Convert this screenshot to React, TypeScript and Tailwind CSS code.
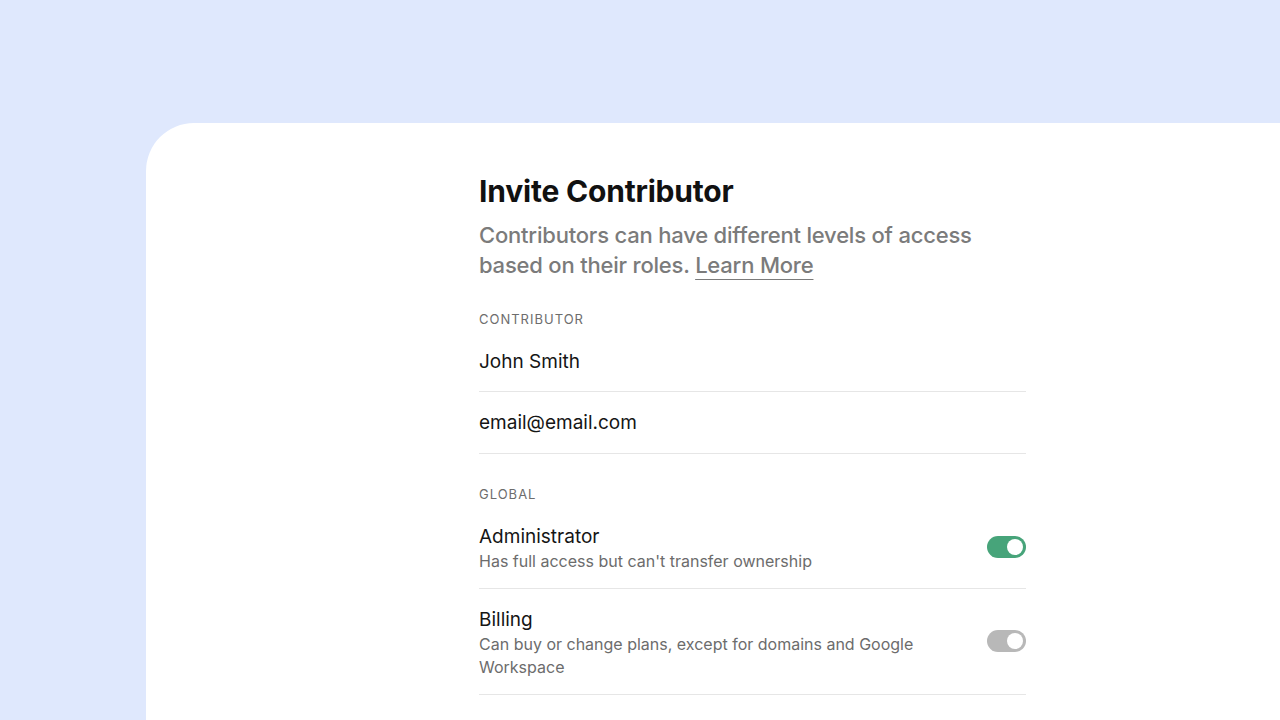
function Toggle({ on }: { on: boolean }) {
  return (
    <div
      className={`mb-[4px] flex h-[22px] w-[39px] shrink-0 items-center justify-end rounded-full px-[3px] ${
        on ? "bg-[#47a47a]" : "bg-[#b8b8b8]"
      }`}
    >
      <div className="h-4 w-4 rounded-full bg-white" />
    </div>
  );
}

function Role({ title, desc, on }: { title: string; desc: string; on: boolean }) {
  return (
    <div className="flex items-center justify-between gap-10 border-b border-[#e6e6e6] pb-[15px] pt-[18px]">
      <div>
        <div className="text-[19px] leading-[26px] text-[#151515]">{title}</div>
        <div className="text-[16px] leading-[23px] text-[#6c6c6c]">{desc}</div>
      </div>
      <Toggle on={on} />
    </div>
  );
}

export default function App() {
  return (
    <div
      className="h-[720px] w-[1280px] overflow-hidden bg-[#dfe8fd] pl-[146px] pt-[123px]"
      style={{ fontFamily: "Inter, 'Liberation Sans', sans-serif" }}
    >
      <div className="h-[650px] rounded-tl-[48px] bg-white pl-[333px] pt-[50px]">
        <div className="w-[547px]">
          <h1 className="text-[30px] font-bold leading-[36px] tracking-[-0.2px] text-[#111111]">
            Invite Contributor
          </h1>
          <p className="mt-[11px] text-[22px] font-medium leading-[30px] tracking-[-0.2px] text-[#7b7b7b]">
            Contributors can have different levels of access based on their roles.{" "}
            <span className="underline decoration-1 underline-offset-[6px]">Learn More</span>
          </p>

          <div className="mt-[30px] text-[13px] leading-[18px] tracking-[1px] text-[#6d6d6d]">
            CONTRIBUTOR
          </div>
          <div className="border-b border-[#e6e6e6] pb-[16px] pt-[21px] text-[19px] leading-[26px] text-[#151515]">
            John Smith
          </div>
          <div className="border-b border-[#e6e6e6] pb-[17px] pt-[18px] text-[19px] leading-[26px] text-[#151515]">
            email@email.com
          </div>

          <div className="mb-[3px] mt-[31px] text-[13px] leading-[18px] tracking-[1px] text-[#6d6d6d]">
            GLOBAL
          </div>
          <Role title="Administrator" desc="Has full access but can't transfer ownership" on />
          <Role
            title="Billing"
            desc="Can buy or change plans, except for domains and Google Workspace"
            on={false}
          />
        </div>
      </div>
    </div>
  );
}
